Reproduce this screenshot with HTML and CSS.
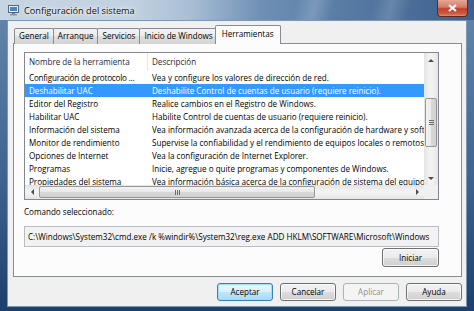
FILE: index.html
```html
<!DOCTYPE html>
<html lang="es">
<head>
<meta charset="utf-8">
<title>Configuración del sistema</title>
<link rel="stylesheet" href="styles.css">
</head>
<body>
<div class="window">
  <div class="titlebar">
    <svg class="appicon" width="11" height="11" viewBox="0 0 11 11">
      <rect x="0.5" y="0.5" width="10" height="7" fill="#e9eef4" stroke="#55667c"/>
      <rect x="2" y="2" width="7" height="4" fill="#4a82c4"/>
      <rect x="4" y="8" width="3" height="1" fill="#6d7a8a"/>
      <rect x="2" y="9" width="7" height="1.5" fill="#8a96a5"/>
    </svg>
    <span class="title">Configuración del sistema</span>
    <div class="close"><svg width="9" height="8" viewBox="0 0 9 8"><path d="M1 1 L8 7 M8 1 L1 7" stroke="#fff" stroke-width="2"/></svg></div>
  </div>
  <div class="frame">
    <div class="client">
      <div class="tabs">
        <div class="tab">General</div>
        <div class="tab">Arranque</div>
        <div class="tab">Servicios</div>
        <div class="tab">Inicio de Windows</div>
        <div class="tab active">Herramientas</div>
      </div>
      <div class="panel">
        <div class="listbox">
          <div class="listview">
            <div class="header">
              <div class="c1">Nombre de la herramienta</div>
              <div class="c2">Descripción</div>
            </div>
            <div class="row"><div class="c1 tight">Configuración de protocolo ...</div><div class="c2">Vea y configure los valores de dirección de red.</div></div>
            <div class="row selected"><div class="c1">Deshabilitar UAC</div><div class="c2">Deshabilite Control de cuentas de usuario (requiere reinicio).</div></div>
            <div class="row"><div class="c1">Editor del Registro</div><div class="c2">Realice cambios en el Registro de Windows.</div></div>
            <div class="row"><div class="c1">Habilitar UAC</div><div class="c2">Habilite Control de cuentas de usuario (requiere reinicio).</div></div>
            <div class="row"><div class="c1">Información del sistema</div><div class="c2">Vea información avanzada acerca de la configuración de hardware y software.</div></div>
            <div class="row"><div class="c1">Monitor de rendimiento</div><div class="c2">Supervise la confiabilidad y el rendimiento de equipos locales o remotos.</div></div>
            <div class="row"><div class="c1">Opciones de Internet</div><div class="c2">Vea la configuración de Internet Explorer.</div></div>
            <div class="row"><div class="c1">Programas</div><div class="c2">Inicie, agregue o quite programas y componentes de Windows.</div></div>
            <div class="row"><div class="c1">Propiedades del sistema</div><div class="c2">Vea información básica acerca de la configuración de sistema del equipo.</div></div>
          </div>
          <div class="vscroll">
            <div class="arrow"><span class="tri up"></span></div>
            <div class="vthumb"><span class="grip-h"></span></div>
            <div class="track"></div>
            <div class="arrow"><span class="tri down"></span></div>
          </div>
          <div class="hscroll">
            <div class="arrow"><span class="tri left"></span></div>
            <div class="hthumb"><span class="grip-v"></span></div>
            <div class="track"></div>
            <div class="arrow"><span class="tri right"></span></div>
          </div>
          <div class="corner"></div>
        </div>
        <div class="label">Comando seleccionado:</div>
        <div class="cmd">C:\Windows\System32\cmd.exe /k %windir%\System32\reg.exe ADD HKLM\SOFTWARE\Microsoft\Windows</div>
        <div class="run-row"><div class="btn">Iniciar</div></div>
      </div>
      <div class="buttons">
        <div class="btn default">Aceptar</div>
        <div class="btn">Cancelar</div>
        <div class="btn disabled">Aplicar</div>
        <div class="btn">Ayuda</div>
      </div>
    </div>
  </div>
</div>
</body>
</html>
```
FILE: styles.css
```css
* { box-sizing: border-box; }
html, body { margin: 0; padding: 0; }
body {
  width: 474px;
  height: 311px;
  overflow: hidden;
  font-family: "Open Sans", "Noto Sans", sans-serif;
  font-size: 8.1px;
  color: #000;
  background: #2a4d78;
}
.window {
  width: 474px;
  height: 311px;
  display: flex;
  flex-direction: column;
  background: linear-gradient(180deg, #6587ad 0%, #3f6590 55%, #1d3f6c 100%);
}
.titlebar {
  position: relative;
  height: 20px;
  flex: none;
  display: flex;
  align-items: center;
  padding-left: 8px;
  background:
    linear-gradient(105deg, transparent 0%, transparent 62%, rgba(255,255,255,0.18) 66%, transparent 70%, transparent 78%, rgba(255,255,255,0.15) 82%, transparent 86%),
    linear-gradient(90deg, #c7d5e3 0%, #c2d1e0 28%, #a9bfd5 40%, #6f90b5 55%, #5a7ea6 70%, #4b6f99 85%, #3c6190 100%);
}
.appicon { flex: none; margin-top: 1px; }
.title {
  margin-left: 5px;
  font-size: 9.2px;
  color: #111;
  text-shadow: 0 0 6px #fff, 0 0 3px #fff;
}
.close {
  position: absolute;
  top: 0;
  right: 6px;
  width: 31px;
  height: 17px;
  border: 1px solid #5e2a26;
  border-top: none;
  border-radius: 0 0 4px 4px;
  background: linear-gradient(180deg, #e6a797 0%, #d27a66 45%, #c0412d 55%, #d05a3e 85%, #e08b6a 100%);
  display: flex;
  align-items: center;
  justify-content: center;
}
.frame {
  flex: 1;
  display: flex;
  padding: 0 7px 4px 7px;
}
.client {
  flex: 1;
  display: flex;
  flex-direction: column;
  background: #f0f0f0;
  border: 1px solid #7e96b1;
  padding: 0 4px 5px 5px;
}
.tabs {
  display: flex;
  align-items: flex-end;
  height: 19px;
  margin-top: 4px;
  padding-left: 1px;
  position: relative;
  z-index: 1;
  margin-bottom: -1px;
}
.tab {
  height: 16px;
  padding: 0 4px;
  line-height: 14px;
  border: 1px solid #898c95;
  border-bottom: none;
  margin-right: -1px;
  border-radius: 2px 2px 0 0;
  background: linear-gradient(180deg, #f3f3f3 0%, #ebebeb 50%, #dedede 50%, #d3d3d3 100%);
  white-space: nowrap;
}
.tab.active {
  height: 19px;
  line-height: 16px;
  background: #fcfcfc;
  margin-left: -2px;
  padding: 0 6px;
}
.panel {
  height: 234px;
  border: 1px solid #898c95;
  background: #fcfcfc;
  padding: 8px 0 0 10px;
  display: flex;
  flex-direction: column;
}
.listbox {
  width: 415px;
  height: 148px;
  border: 1px solid #828790;
  background: #fff;
  display: grid;
  grid-template-columns: 1fr 14px;
  grid-template-rows: 1fr 14px;
}
.listview { overflow: hidden; }
.header {
  display: flex;
  height: 18px;
  line-height: 18px;
  color: #1e2a3a;
}
.header .c1 { border-right: 1px solid #e3e6ea; }
.row {
  display: flex;
  height: 13px;
  line-height: 13px;
  white-space: nowrap;
}
.row.selected { background: #3399ff; color: #fff; }
.c1 {
  flex: none;
  width: 123px;
  padding-left: 4px;
  white-space: nowrap;
  overflow: hidden;
}
.c1.tight { letter-spacing: -0.2px; }
.c2 {
  flex: 1;
  padding-left: 4px;
  white-space: nowrap;
  overflow: hidden;
}
.vscroll, .hscroll {
  display: flex;
  background: linear-gradient(90deg, #e4e4e4, #f2f2f2 40%, #f2f2f2 60%, #e4e4e4);
}
.vscroll { flex-direction: column; }
.hscroll { background: linear-gradient(180deg, #e4e4e4, #f2f2f2 40%, #f2f2f2 60%, #e4e4e4); }
.arrow {
  flex: none;
  width: 14px;
  height: 14px;
  display: flex;
  align-items: center;
  justify-content: center;
}
.track { flex: 1; }
.tri { width: 0; height: 0; border: 3px solid transparent; }
.tri.up { border-bottom: 3px solid #4d4d4d; border-top: none; }
.tri.down { border-top: 3px solid #4d4d4d; border-bottom: none; }
.tri.left { border-right: 3px solid #4d4d4d; border-left: none; }
.tri.right { border-left: 3px solid #4d4d4d; border-right: none; }
.vthumb {
  flex: none;
  margin: 31px 1px 0 1px;
  height: 49px;
  border: 1px solid #979797;
  border-radius: 2px;
  background: linear-gradient(90deg, #f3f3f3, #e8e8e8 50%, #d8d8d8 51%, #d0d0d0);
  display: flex;
  align-items: center;
  justify-content: center;
}
.grip-h {
  width: 5px;
  height: 5px;
  background: repeating-linear-gradient(180deg, #6b6b6b 0 1px, transparent 1px 2px);
}
.hthumb {
  flex: none;
  width: 276px;
  margin: 1px 0;
  border: 1px solid #979797;
  border-radius: 2px;
  background: linear-gradient(180deg, #f3f3f3, #e8e8e8 50%, #d8d8d8 51%, #d0d0d0);
  display: flex;
  align-items: center;
  justify-content: center;
}
.grip-v {
  width: 5px;
  height: 5px;
  background: repeating-linear-gradient(90deg, #6b6b6b 0 1px, transparent 1px 2px);
}
.corner { background: #f0f0f0; }
.label {
  margin-top: 5px;
  line-height: 13px;
  height: 13px;
}
.cmd {
  margin-top: 8px;
  width: 415px;
  height: 21px;
  line-height: 19px;
  border: 1px solid #b9bcc1;
  background: #f2f2f2;
  padding: 0 3px;
  white-space: nowrap;
  overflow: hidden;
}
.run-row {
  width: 415px;
  display: flex;
  justify-content: flex-end;
  margin-top: 1px;
}
.btn {
  width: 57px;
  height: 19px;
  line-height: 17px;
  text-align: center;
  border: 1px solid #707070;
  border-radius: 3px;
  background: linear-gradient(180deg, #f2f2f2 0%, #ebebeb 50%, #dddddd 51%, #cfcfcf 100%);
  box-shadow: inset 0 0 0 1px rgba(255,255,255,0.7);
}
.buttons {
  display: flex;
  justify-content: flex-end;
  gap: 7px;
  margin-top: 6px;
}
.buttons .btn { width: 56px; height: 18px; line-height: 16px; }
.btn.default {
  border-color: #3c7fb1;
  background: linear-gradient(180deg, #eaf6fd 0%, #d9f0fc 50%, #bee6fd 51%, #a7d9f5 100%);
  box-shadow: inset 0 0 0 1px #9fdcf7;
}
.btn.disabled {
  border-color: #adb2b5;
  background: #f4f4f4;
  color: #8f8f8f;
  box-shadow: none;
}
```
